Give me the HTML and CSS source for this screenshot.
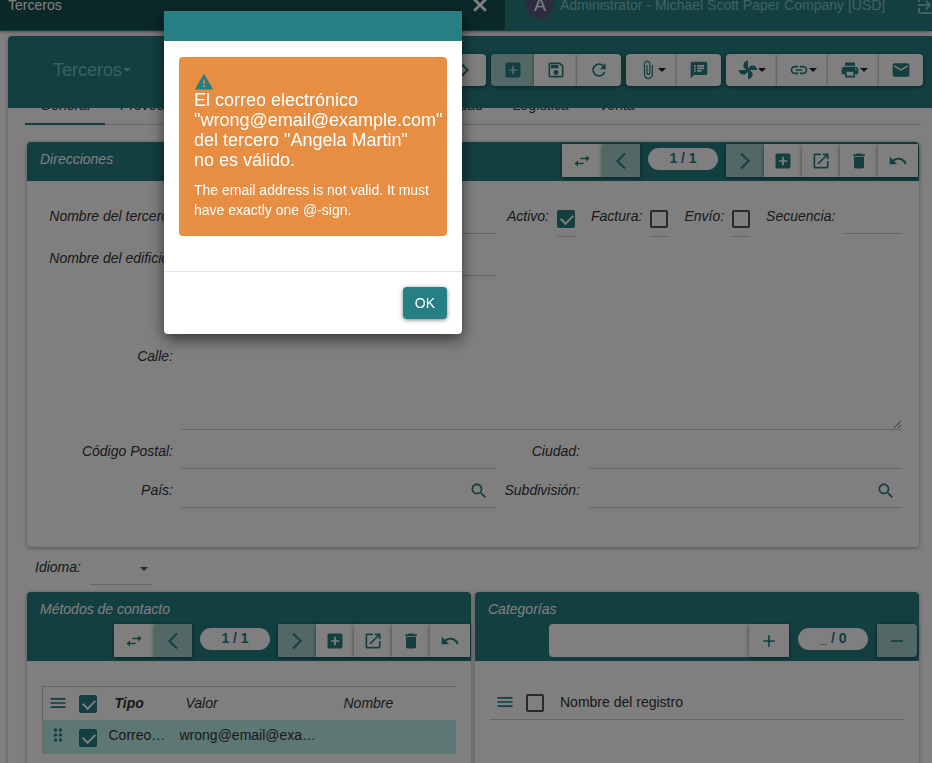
FILE: index.html
```html
<!DOCTYPE html>
<html lang="es">
<head>
    <meta charset="UTF-8">
    <meta name="viewport" content="width=device-width, initial-scale=1.0">
    <title>Terceros</title>
    <link rel="stylesheet" href="styles.css">
</head>
<body>
    <svg class="sprite" aria-hidden="true">
        <symbol id="i-close" viewBox="0 0 24 24"><path d="M5 5l14 14M19 5L5 19" fill="none" stroke="currentColor" stroke-width="3.4"/></symbol>
        <symbol id="i-exit" viewBox="0 0 24 24"><path d="M10.09 15.59L11.5 17l5-5-5-5-1.41 1.41L12.67 11H3v2h9.67l-2.58 2.59zM19 3H5c-1.11 0-2 .9-2 2v4h2V5h14v14H5v-4H3v4c0 1.1.89 2 2 2h14c1.1 0 2-.9 2-2V5c0-1.1-.9-2-2-2z"/></symbol>
        <symbol id="i-prev" viewBox="0 0 24 24"><path d="M17.67 3.87L15.9 2.1 6 12l9.9 9.9 1.77-1.77L9.54 12z"/></symbol>
        <symbol id="i-next" viewBox="0 0 24 24"><path d="M6.33 20.13L8.1 21.9 18 12 8.1 2.1 6.33 3.87 14.46 12z"/></symbol>
        <symbol id="i-addbox" viewBox="0 0 24 24"><path d="M19 3H5c-1.11 0-2 .9-2 2v14c0 1.1.89 2 2 2h14c1.1 0 2-.9 2-2V5c0-1.1-.9-2-2-2zm-2 10h-4v4h-2v-4H7v-2h4V7h2v4h4v2z"/></symbol>
        <symbol id="i-save" viewBox="0 0 24 24"><path d="M17 3H5c-1.11 0-2 .9-2 2v14c0 1.1.89 2 2 2h14c1.1 0 2-.9 2-2V7l-4-4zm2 16H5V5h11.17L19 7.83V19zm-7-7c-1.66 0-3 1.34-3 3s1.34 3 3 3 3-1.34 3-3-1.34-3-3-3zM6 6h9v4H6z"/></symbol>
        <symbol id="i-refresh" viewBox="0 0 24 24"><path d="M17.65 6.35C16.2 4.9 14.21 4 12 4c-4.42 0-7.99 3.58-7.99 8s3.57 8 7.99 8c3.73 0 6.84-2.55 7.73-6h-2.08c-.82 2.33-3.04 4-5.65 4-3.31 0-6-2.69-6-6s2.69-6 6-6c1.66 0 3.14.69 4.22 1.78L13 11h7V4l-2.35 2.35z"/></symbol>
        <symbol id="i-attach" viewBox="0 0 24 24"><path d="M16.5 6v11.5c0 2.21-1.79 4-4 4s-4-1.79-4-4V5c0-1.38 1.12-2.5 2.5-2.5s2.5 1.12 2.5 2.5v10.5c0 .55-.45 1-1 1s-1-.45-1-1V6H10v9.5c0 1.38 1.12 2.5 2.5 2.5s2.5-1.12 2.5-2.5V5c0-2.21-1.79-4-4-4S7 2.79 7 5v12.5c0 3.04 2.46 5.5 5.5 5.5s5.5-2.46 5.5-5.5V6h-1.5z"/></symbol>
        <symbol id="i-note" viewBox="0 0 24 24"><path d="M20 2H4c-1.1 0-1.99.9-1.99 2L2 22l4-4h14c1.1 0 2-.9 2-2V4c0-1.1-.9-2-2-2zM8 14H6v-2h2v2zm0-3H6V9h2v2zm0-3H6V6h2v2zm7 6h-5v-2h5v2zm3-3h-8V9h8v2zm0-3h-8V6h8v2z"/></symbol>
        <symbol id="i-action" viewBox="0 0 24 24"><path d="M12 12c0-3 2.5-5.5 5.5-5.5S23 9 23 12H12zm0 0c0 3-2.5 5.5-5.5 5.5S1 15 1 12h11zm0 0c-3 0-5.5-2.5-5.5-5.5S9 1 12 1v11zm0 0c3 0 5.5 2.5 5.5 5.5S15 23 12 23V12z"/></symbol>
        <symbol id="i-link" viewBox="0 0 24 24"><path d="M3.9 12c0-1.71 1.39-3.1 3.1-3.1h4V7H7c-2.76 0-5 2.24-5 5s2.24 5 5 5h4v-1.9H7c-1.71 0-3.1-1.39-3.1-3.1zM8 13h8v-2H8v2zm9-6h-4v1.9h4c1.71 0 3.1 1.39 3.1 3.1s-1.39 3.1-3.1 3.1h-4V17h4c2.76 0 5-2.24 5-5s-2.24-5-5-5z"/></symbol>
        <symbol id="i-print" viewBox="0 0 24 24"><path d="M19 8H5c-1.66 0-3 1.34-3 3v6h4v4h12v-4h4v-6c0-1.66-1.34-3-3-3zm-3 11H8v-5h8v5zm3-7c-.55 0-1-.45-1-1s.45-1 1-1 1 .45 1 1-.45 1-1 1zm-1-9H6v4h12V3z"/></symbol>
        <symbol id="i-email" viewBox="0 0 24 24"><path d="M20 4H4c-1.1 0-1.99.9-1.99 2L2 18c0 1.1.9 2 2 2h16c1.1 0 2-.9 2-2V6c0-1.1-.9-2-2-2zm0 4l-8 5-8-5V6l8 5 8-5v2z"/></symbol>
        <symbol id="i-swap" viewBox="0 0 24 24"><path d="M6.99 11L3 15l3.99 4v-3H14v-2H6.99v-3zM21 9l-3.99-4v3H10v2h7.01v3L21 9z"/></symbol>
        <symbol id="i-open" viewBox="0 0 24 24"><path d="M19 19H5V5h7V3H5c-1.11 0-2 .9-2 2v14c0 1.1.89 2 2 2h14c1.1 0 2-.9 2-2v-7h-2v7zM14 3v2h3.59l-9.83 9.83 1.41 1.41L19 6.41V10h2V3h-7z"/></symbol>
        <symbol id="i-delete" viewBox="0 0 24 24"><path d="M6 19c0 1.1.9 2 2 2h8c1.1 0 2-.9 2-2V7H6v12zM19 4h-3.5l-1-1h-5l-1 1H5v2h14V4z"/></symbol>
        <symbol id="i-undo" viewBox="0 0 24 24"><path d="M12.5 8c-2.65 0-5.05.99-6.9 2.6L2 7v9h9l-3.62-3.62c1.39-1.16 3.16-1.88 5.12-1.88 3.54 0 6.55 2.31 7.6 5.5l2.37-.78C21.08 11.03 17.15 8 12.5 8z"/></symbol>
        <symbol id="i-search" viewBox="0 0 24 24"><path d="M15.5 14h-.79l-.28-.27C15.41 12.59 16 11.11 16 9.5 16 5.91 13.09 3 9.5 3S3 5.91 3 9.5 5.91 16 9.5 16c1.61 0 3.09-.59 4.23-1.57l.27.28v.79l5 4.99L20.49 19l-4.99-5zm-6 0C7.01 14 5 11.99 5 9.5S7.01 5 9.5 5 14 7.01 14 9.5 11.99 14 9.5 14z"/></symbol>
        <symbol id="i-menu" viewBox="0 0 24 24"><path d="M3 18h18v-2H3v2zm0-5h18v-2H3v2zm0-7v2h18V6H3z"/></symbol>
        <symbol id="i-drag" viewBox="0 0 24 24"><path d="M11 18c0 1.1-.9 2-2 2s-2-.9-2-2 .9-2 2-2 2 .9 2 2zm-2-8c-1.1 0-2 .9-2 2s.9 2 2 2 2-.9 2-2-.9-2-2-2zm0-6c-1.1 0-2 .9-2 2s.9 2 2 2 2-.9 2-2-.9-2-2-2zm6 4c1.1 0 2-.9 2-2s-.9-2-2-2-2 .9-2 2 .9 2 2 2zm0 2c-1.1 0-2 .9-2 2s.9 2 2 2 2-.9 2-2-.9-2-2-2zm0 6c-1.1 0-2 .9-2 2s.9 2 2 2 2-.9 2-2-.9-2-2-2z"/></symbol>
        <symbol id="i-add" viewBox="0 0 24 24"><path d="M19 13h-6v6h-2v-6H5v-2h6V5h2v6h6v2z"/></symbol>
        <symbol id="i-remove" viewBox="0 0 24 24"><path d="M19 13H5v-2h14v2z"/></symbol>
        <symbol id="i-warning" viewBox="0 0 24 24"><path d="M1 21h22L12 2 1 21z"/><path class="mark" d="M13 18h-2v-2h2v2zm0-4h-2v-4h2v4z"/></symbol>
    </svg>

    <header class="topbar">
        <div class="topbar-tab">
            <span>Terceros</span>
            <button class="plain" aria-label="Cerrar"><svg class="icon"><use href="#i-close"/></svg></button>
        </div>
        <div class="topbar-user">
            <span class="avatar">A</span>
            <a href="#" class="user-name">Administrator - Michael Scott Paper Company [USD]</a>
            <button class="plain logout" aria-label="Salir"><svg class="icon icon-lg"><use href="#i-exit"/></svg></button>
        </div>
    </header>

    <main class="panel">
        <div class="panel-heading">
            <a href="#" class="panel-title">Terceros<span class="caret"></span></a>
            <div class="toolbar">
                <div class="btn-group">
                    <button class="btn" aria-label="Anterior"><svg class="icon"><use href="#i-prev"/></svg></button>
                    <button class="btn" aria-label="Siguiente"><svg class="icon"><use href="#i-next"/></svg></button>
                </div>
                <div class="btn-group">
                    <button class="btn" disabled aria-label="Nuevo"><svg class="icon"><use href="#i-addbox"/></svg></button>
                    <button class="btn" aria-label="Guardar"><svg class="icon"><use href="#i-save"/></svg></button>
                    <button class="btn" aria-label="Recargar"><svg class="icon"><use href="#i-refresh"/></svg></button>
                </div>
                <div class="btn-group">
                    <button class="btn btn-menu" aria-label="Adjuntos"><svg class="icon"><use href="#i-attach"/></svg><span class="caret"></span></button>
                    <button class="btn" aria-label="Notas"><svg class="icon"><use href="#i-note"/></svg></button>
                </div>
                <div class="btn-group">
                    <button class="btn btn-menu" aria-label="Acciones"><svg class="icon"><use href="#i-action"/></svg><span class="caret"></span></button>
                    <button class="btn btn-menu" aria-label="Relacionado"><svg class="icon"><use href="#i-link"/></svg><span class="caret"></span></button>
                    <button class="btn btn-menu" aria-label="Imprimir"><svg class="icon"><use href="#i-print"/></svg><span class="caret"></span></button>
                    <button class="btn" aria-label="Correo"><svg class="icon"><use href="#i-email"/></svg></button>
                </div>
            </div>
        </div>

        <div class="panel-body">
            <nav class="tabs">
                <a href="#" class="tab active">General</a>
                <a href="#" class="tab">Proveedores</a>
                <a href="#" class="tab">Identificadores, correos</a>
                <a href="#" class="tab">Contabilidad</a>
                <a href="#" class="tab">Logística</a>
                <a href="#" class="tab">Venta</a>
            </nav>

            <section class="card">
                <div class="card-heading">
                    <h2>Direcciones</h2>
                    <div class="card-tools">
                        <button class="tool" aria-label="Cambiar vista"><svg class="icon"><use href="#i-swap"/></svg></button>
                        <button class="tool" disabled aria-label="Anterior"><svg class="icon"><use href="#i-prev"/></svg></button>
                        <span class="badge">1 / 1</span>
                        <button class="tool" disabled aria-label="Siguiente"><svg class="icon"><use href="#i-next"/></svg></button>
                        <button class="tool" aria-label="Nuevo"><svg class="icon"><use href="#i-addbox"/></svg></button>
                        <button class="tool" aria-label="Abrir"><svg class="icon"><use href="#i-open"/></svg></button>
                        <button class="tool" aria-label="Borrar"><svg class="icon"><use href="#i-delete"/></svg></button>
                        <button class="tool" aria-label="Deshacer"><svg class="icon"><use href="#i-undo"/></svg></button>
                    </div>
                </div>
                <div class="form">
                    <label for="party_name">Nombre del tercero:</label>
                    <input type="text" id="party_name" class="field">
                    <div class="flags wide-right">
                        <label for="active">Activo:</label>
                        <span class="check-field"><input type="checkbox" id="active" checked></span>
                        <label for="invoice">Factura:</label>
                        <span class="check-field"><input type="checkbox" id="invoice"></span>
                        <label for="delivery">Envío:</label>
                        <span class="check-field"><input type="checkbox" id="delivery"></span>
                        <label for="sequence">Secuencia:</label>
                        <input type="text" id="sequence" class="field">
                    </div>

                    <label for="building">Nombre del edificio:</label>
                    <input type="text" id="building" class="field">
                    <span class="wide-right"></span>

                    <label for="street" class="middle">Calle:</label>
                    <textarea id="street" class="field street"></textarea>

                    <label for="zip">Código Postal:</label>
                    <input type="text" id="zip" class="field">
                    <label for="city">Ciudad:</label>
                    <input type="text" id="city" class="field">

                    <label for="country">País:</label>
                    <div class="field search-field">
                        <input type="text" id="country">
                        <button class="plain" aria-label="Buscar país"><svg class="icon"><use href="#i-search"/></svg></button>
                    </div>
                    <label for="subdivision">Subdivisión:</label>
                    <div class="field search-field">
                        <input type="text" id="subdivision">
                        <button class="plain" aria-label="Buscar subdivisión"><svg class="icon"><use href="#i-search"/></svg></button>
                    </div>
                </div>
            </section>

            <div class="language">
                <label for="lang">Idioma:</label>
                <div class="select-wrap">
                    <select id="lang" class="field"><option></option></select>
                    <span class="caret"></span>
                </div>
            </div>

            <div class="columns">
                <section class="card">
                    <div class="card-heading stacked">
                        <h2>Métodos de contacto</h2>
                        <div class="card-tools">
                            <button class="tool" aria-label="Cambiar vista"><svg class="icon"><use href="#i-swap"/></svg></button>
                            <button class="tool" disabled aria-label="Anterior"><svg class="icon"><use href="#i-prev"/></svg></button>
                            <span class="badge">1 / 1</span>
                            <button class="tool" disabled aria-label="Siguiente"><svg class="icon"><use href="#i-next"/></svg></button>
                            <button class="tool" aria-label="Nuevo"><svg class="icon"><use href="#i-addbox"/></svg></button>
                            <button class="tool" aria-label="Abrir"><svg class="icon"><use href="#i-open"/></svg></button>
                            <button class="tool" aria-label="Borrar"><svg class="icon"><use href="#i-delete"/></svg></button>
                            <button class="tool" aria-label="Deshacer"><svg class="icon"><use href="#i-undo"/></svg></button>
                        </div>
                    </div>
                    <div class="table-wrap">
                        <table class="contacts">
                            <thead>
                                <tr>
                                    <th class="col-icon"><svg class="icon"><use href="#i-menu"/></svg></th>
                                    <th class="col-check"><input type="checkbox" checked aria-label="Seleccionar todo"></th>
                                    <th class="col-type required">Tipo</th>
                                    <th class="col-value">Valor</th>
                                    <th class="col-name">Nombre</th>
                                </tr>
                            </thead>
                            <tbody>
                                <tr class="selected">
                                    <td class="col-icon"><svg class="icon"><use href="#i-drag"/></svg></td>
                                    <td class="col-check"><input type="checkbox" checked aria-label="Seleccionar fila"></td>
                                    <td>Correo electrónico</td>
                                    <td>wrong@email@example.com</td>
                                    <td></td>
                                </tr>
                            </tbody>
                        </table>
                    </div>
                </section>

                <section class="card">
                    <div class="card-heading stacked">
                        <h2>Categorías</h2>
                        <div class="card-tools category-tools">
                            <input type="text" class="category-input" aria-label="Categoría">
                            <button class="tool" aria-label="Añadir"><svg class="icon"><use href="#i-add"/></svg></button>
                            <span class="badge">_ / 0</span>
                            <button class="tool tool-last" disabled aria-label="Quitar"><svg class="icon"><use href="#i-remove"/></svg></button>
                        </div>
                    </div>
                    <div class="table-wrap">
                        <table class="categories">
                            <thead>
                                <tr>
                                    <th class="col-icon"><svg class="icon"><use href="#i-menu"/></svg></th>
                                    <th class="col-check"><input type="checkbox" aria-label="Seleccionar todo"></th>
                                    <th class="col-record">Nombre del registro</th>
                                </tr>
                            </thead>
                        </table>
                    </div>
                </section>
            </div>
        </div>
    </main>

    <div class="backdrop">
        <div class="modal" role="alertdialog" aria-labelledby="alert-title">
            <div class="modal-header"></div>
            <div class="modal-body">
                <div class="alert">
                    <svg class="icon warning"><use href="#i-warning"/></svg>
                    <h4 id="alert-title">El correo electrónico "wrong@email@example.com" del tercero "Angela Martin" no es válido.</h4>
                    <p>The email address is not valid. It must have exactly one @-sign.</p>
                </div>
            </div>
            <div class="modal-footer">
                <button class="btn-ok">OK</button>
            </div>
        </div>
    </div>
</body>
</html>
```

FILE: styles.css
```css
* {
    box-sizing: border-box;
}
body {
    margin: 0;
    height: 100vh;
    overflow: hidden;
    font-family: "Liberation Sans", Arial, sans-serif;
    font-size: 14px;
    line-height: 20px;
    color: #333;
    background-color: #fff;
}
button, input, select, textarea {
    font: inherit;
    color: inherit;
}
a {
    color: inherit;
    text-decoration: none;
}
h2, h4, p {
    margin: 0;
    font-weight: normal;
}
.sprite {
    display: none;
}
.icon {
    display: block;
    width: 20px;
    height: 20px;
    flex: none;
    fill: currentColor;
}
.icon-lg {
    width: 24px;
    height: 24px;
}
.plain {
    padding: 0;
    border: none;
    background: none;
    color: #267f82;
}
.caret {
    display: inline-block;
    border: 4px solid transparent;
    border-top-color: currentColor;
    border-bottom: none;
}

/* top bar */
.topbar {
    display: flex;
    height: 52px;
    margin-top: -21px;
    background-color: #267f82;
    box-shadow: 0 1px 3px rgba(0, 0, 0, 0.4);
}
.topbar-tab {
    display: flex;
    flex: none;
    align-items: center;
    justify-content: space-between;
    width: 505px;
    margin-bottom: 1px;
    padding: 0 15px 0 8px;
    border-radius: 0 0 4px 0;
    background-color: #165053;
    color: #fff;
}
.topbar-tab .plain {
    color: #fff;
}
.topbar-user {
    display: flex;
    flex: 1;
    align-items: center;
    min-width: 0;
    padding-left: 21px;
    color: #86c4c4;
    white-space: nowrap;
}
.avatar {
    flex: none;
    width: 28px;
    height: 28px;
    margin-right: 6px;
    border-radius: 50%;
    background-color: #5a5a82;
    color: #fff;
    font-size: 18px;
    line-height: 28px;
    text-align: center;
}
.logout {
    margin-left: 30px;
    color: #86c4c4;
}

/* main panel */
.panel {
    margin: 5px 0 0 8px;
    border-radius: 4px 0 0 0;
    box-shadow: 0 1px 4px rgba(0, 0, 0, 0.3);
}
.panel-heading {
    position: relative;
    z-index: 1;
    display: flex;
    justify-content: space-between;
    padding: 18px 9px 22px 45px;
    border-radius: 4px 0 0 0;
    background-color: #267f82;
}
.panel-title {
    display: flex;
    align-items: center;
    gap: 1px;
    font-size: 18px;
    color: #70c4c2;
}
.toolbar {
    display: flex;
    gap: 5px;
}
.btn-group {
    display: flex;
    border-radius: 4px;
    box-shadow: 0 1px 4px rgba(0, 0, 0, 0.5);
    overflow: hidden;
}
.btn {
    display: flex;
    align-items: center;
    justify-content: center;
    width: 44px;
    height: 32px;
    padding: 0;
    border: none;
    background-color: #fff;
    color: #267f82;
    box-shadow: 0 0 3px rgba(0, 0, 0, 0.5);
}
.btn-group:nth-child(2) .btn:not(:last-child) {
    width: 43px;
}
.btn-menu {
    width: 51px;
}
.btn-menu .caret {
    border-top-color: #222;
}
.btn:disabled, .tool:disabled {
    background-color: #a8cfce;
}
.panel-body {
    padding: 0 11px 20px 17px;
}
.tabs {
    display: flex;
    margin-top: -25px;
    border-bottom: 1px solid #ccc;
}
.tab {
    padding: 12px 15px 8px;
    white-space: nowrap;
}
.tab.active {
    margin-bottom: -1px;
    border-bottom: 2px solid #267f82;
}

/* cards */
.card {
    border-radius: 4px;
    box-shadow: 0 1px 4px rgba(0, 0, 0, 0.35);
}
.panel-body > .card {
    margin: 17px 2px 4px;
}
.card-heading {
    display: flex;
    justify-content: space-between;
    padding: 2px 1px 4px 13px;
    border-radius: 4px 4px 0 0;
    background-color: #267f82;
    color: #fff;
}
.card-heading h2 {
    padding-top: 5px;
    font-size: 14px;
    font-style: italic;
    line-height: 20px;
}
.card-heading.stacked {
    flex-direction: column;
}
.stacked h2 {
    height: 30px;
}
.card-tools {
    display: flex;
    justify-content: flex-end;
}
.tool {
    display: flex;
    align-items: center;
    justify-content: center;
    width: 38px;
    height: 33px;
    padding: 0;
    border: none;
    background-color: #fff;
    color: #267f82;
    box-shadow: 0 1px 4px rgba(0, 0, 0, 0.5);
}
.tool:first-child, .tool:last-child {
    width: 40px;
}
.badge {
    width: 70px;
    height: 22px;
    margin: 4px 8px 0;
    border-radius: 11px;
    background-color: #fff;
    color: #267f82;
    font-weight: bold;
    line-height: 21px;
    text-align: center;
}
.category-tools {
    padding-right: 1px;
}
.category-tools .tool {
    width: 40px;
}
.category-tools .badge {
    margin: 4px 9px 0;
}
.category-tools .tool-last {
    border-radius: 0 4px 4px 0;
}
.category-input {
    width: 200px;
    height: 33px;
    border: none;
    border-radius: 4px 0 0 4px;
    background-color: #fff;
}

/* form */
.form {
    display: grid;
    grid-template-columns: 128px 1fr 76px 1fr;
    align-items: start;
    gap: 5px 9px;
    padding: 19px 17px 39px 18px;
}
label {
    padding-top: 6px;
    font-style: italic;
    text-align: right;
    white-space: nowrap;
}
label.middle {
    align-self: center;
    padding-top: 0;
}
.field {
    width: 100%;
    min-width: 0;
    height: 34px;
    padding: 0;
    border: none;
    border-bottom: 1px solid #ccc;
    border-radius: 0;
    background: none;
    outline: none;
}
.wide-right {
    grid-column: 3 / 5;
}
.street {
    grid-column: 2 / 5;
    height: 149px;
    resize: vertical;
}
.flags {
    display: flex;
    align-items: flex-start;
    padding-left: 3px;
}
.flags .field {
    flex: 1;
}
.flags label {
    margin-right: 8px;
}
.check-field {
    margin-right: 16px;
    padding: 10px 0 8px;
    border-bottom: 1px solid #ccc;
}
input[type="checkbox"] {
    appearance: none;
    display: block;
    position: relative;
    width: 18px;
    height: 18px;
    margin: 0;
    border: 2px solid #555;
    border-radius: 2px;
}
input[type="checkbox"]:checked {
    border-color: #267f82;
    background-color: #267f82;
}
input[type="checkbox"]:checked::before {
    content: "";
    position: absolute;
    top: 0;
    left: 4px;
    width: 6px;
    height: 10px;
    border: solid #fff;
    border-width: 0 2px 2px 0;
    transform: rotate(45deg);
}
.search-field {
    display: flex;
    align-items: center;
    padding-right: 6px;
}
.search-field input {
    flex: 1;
    min-width: 0;
    border: none;
    background: none;
}
.language {
    display: flex;
    gap: 9px;
    padding: 0 10px 7px;
}
.select-wrap {
    position: relative;
    width: 61px;
}
.select-wrap select {
    display: block;
    appearance: none;
}
.select-wrap .caret {
    position: absolute;
    top: 16px;
    right: 3px;
    color: #555;
    pointer-events: none;
}

/* tables */
.columns {
    display: grid;
    grid-template-columns: 1fr 1fr;
    gap: 4px;
    margin: 0 2px;
}
.table-wrap {
    min-height: 140px;
    padding: 25px 15px;
}
table {
    width: 100%;
    table-layout: fixed;
    border-collapse: collapse;
}
th, td {
    height: 34px;
    padding: 0 4px;
    overflow: hidden;
    text-align: left;
    text-overflow: ellipsis;
    vertical-align: middle;
    white-space: nowrap;
}
td {
    padding-right: 7px;
    padding-bottom: 4px;
}
th {
    height: 33px;
    font-weight: normal;
    font-style: italic;
}
th.required {
    padding-left: 10px;
    font-weight: bold;
}
.contacts {
    border: solid #ccc;
    border-width: 1px 0 0 1px;
}
.selected {
    background-color: #baeeea;
}
.col-icon {
    width: 32px;
    padding-left: 5px;
    color: #267f82;
}
.col-check {
    width: 30px;
    padding: 2px 4px 0;
}
.col-type {
    width: 71px;
}
.col-value {
    width: 151px;
    padding-left: 10px;
}
.col-name {
    padding-left: 17px;
}
.categories th {
    border-bottom: 1px solid #ccc;
}
.categories .col-check {
    width: 34px;
}
.categories .col-record {
    font-style: normal;
}

/* modal */
.backdrop {
    position: fixed;
    inset: 0;
    z-index: 10;
    padding: 11px 0 0 164px;
    background-color: rgba(0, 0, 0, 0.5);
}
.modal {
    width: 298px;
    border-radius: 4px;
    background-color: #fff;
    box-shadow: 0 5px 15px rgba(0, 0, 0, 0.6);
}
.modal-header {
    height: 30px;
    background-color: #267f82;
}
.modal-body {
    padding: 16px 15px 35px;
}
.alert {
    padding: 15px 15px 16px;
    border-radius: 4px;
    background-color: #e78e42;
    color: #fff;
}
.alert h4 {
    margin: -2px 0 10px;
    font-size: 18px;
    line-height: 20px;
}
.warning {
    color: #267f82;
}
.mark {
    fill: #e78e42;
}
.modal-footer {
    display: flex;
    justify-content: flex-end;
    padding: 15px;
    border-top: 1px solid #e5e5e5;
}
.btn-ok {
    height: 32px;
    padding: 0 12px;
    border: none;
    border-radius: 4px;
    background-color: #267f82;
    color: #fff;
    box-shadow: 0 1px 4px rgba(0, 0, 0, 0.5);
}
```
